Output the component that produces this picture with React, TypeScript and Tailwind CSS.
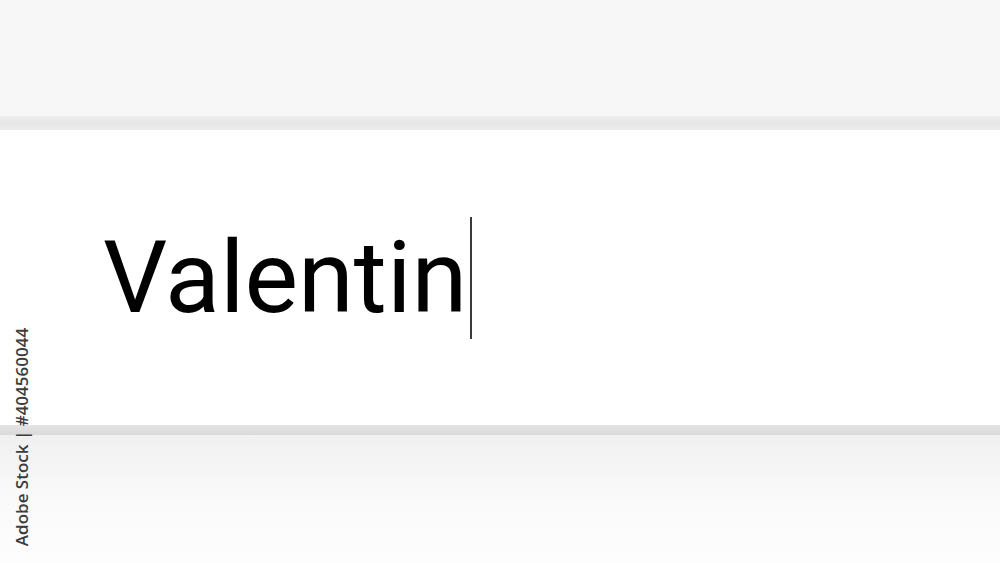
export default function App() {
  return (
    <div className="relative flex h-[563px] w-[1000px] flex-col overflow-hidden bg-[#f6f6f6] font-['Roboto',sans-serif]">
      <div className="h-[116px] bg-[#f7f7f7]" />
      <div className="h-[14px] bg-gradient-to-b from-[#eeeeee] via-[#e6e6e6] to-[#ececec]" />
      <div className="flex h-[295px] items-center bg-white pl-[103px]">
        <div className="flex items-center">
          <span className="text-[101px] leading-none tracking-[0px] text-black">Valentin</span>
          <span className="ml-[3px] h-[122px] w-[2px] bg-[#3a3a3a]" />
        </div>
      </div>
      <div className="h-[10px] bg-gradient-to-b from-[#e4e4e4] to-[#dadada]" />
      <div className="flex-1 bg-gradient-to-b from-[#f0f0f0] via-[#fafafa] to-[#fdfdfd]" />

      <div className="absolute left-[22px] top-[437px] -translate-x-1/2 -translate-y-1/2 -rotate-90 whitespace-nowrap font-['Open_Sans',sans-serif] text-[17px] font-semibold text-[#3d3d3d]">
        Adobe Stock | #404560044
      </div>
    </div>
  );
}
